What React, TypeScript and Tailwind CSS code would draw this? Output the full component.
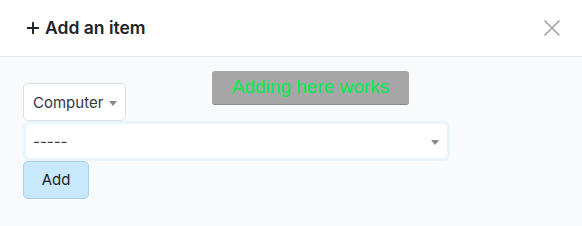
import { Plus } from 'lucide-react';

function Caret() {
  return (
    <svg width="8" height="5" viewBox="0 0 8 5" className="shrink-0">
      <path d="M0 0h8L4 5z" fill="#888" />
    </svg>
  );
}

export default function App() {
  return (
    <div className="w-[582px] h-[226px] bg-white flex flex-col font-['Inter',sans-serif] text-[#212529]">
      {/* Header */}
      <header className="h-[57px] shrink-0 flex items-center justify-between border-b border-[#e5e7eb] pl-[24px] pr-[21px]">
        <div className="flex items-center gap-[3px] text-[17.5px] font-semibold text-[#1f2328]">
          <Plus className="h-[18px] w-[18px]" strokeWidth={2.6} />
          <span>Add an item</span>
        </div>
        <button type="button" aria-label="Close">
          <svg width="18" height="18" viewBox="0 0 18 18">
            <path d="M1.5 1.5l15 15M16.5 1.5l-15 15" stroke="#a3a3a3" strokeWidth="1.6" />
          </svg>
        </button>
      </header>

      {/* Body */}
      <main className="flex-1 bg-[#f8fafc] pt-[14px] px-[23px]">
        <div className="flex items-start">
          <div className="mt-[12px] h-[38px] w-[103px] flex items-center gap-[6px] pl-[9px] pt-[3px] bg-white border border-[#dee2e6] rounded-[5px] text-[15px] text-[#343a40]">
            <span>Computer</span>
            <Caret />
          </div>
          <div className="ml-[86px] h-[34px] w-[197px] flex items-center justify-center bg-[#a6a6a6] rounded-[3px] border-b border-[#8a8a8a] font-['Liberation_Sans',Arial,sans-serif] text-[19px] text-[#00ec4a]">
            Adding here works
          </div>
        </div>
        <div className="w-[427px] h-[40px] rounded-[6px] bg-[#e8f5fd] p-[3px]">
          <div className="h-full w-full bg-white rounded-[4px] flex items-center justify-between pl-[7px] pr-[8px] pt-[2px] text-[15px] text-[#343a40]">
            <span>-----</span>
            <Caret />
          </div>
        </div>
        <button
          type="button"
          className="h-[38px] w-[66px] rounded-[5px] bg-[#c8e9fc] border border-[#a9d2ea] text-[15px] font-normal text-[#1f2328]"
        >
          Add
        </button>
      </main>
    </div>
  );
}
